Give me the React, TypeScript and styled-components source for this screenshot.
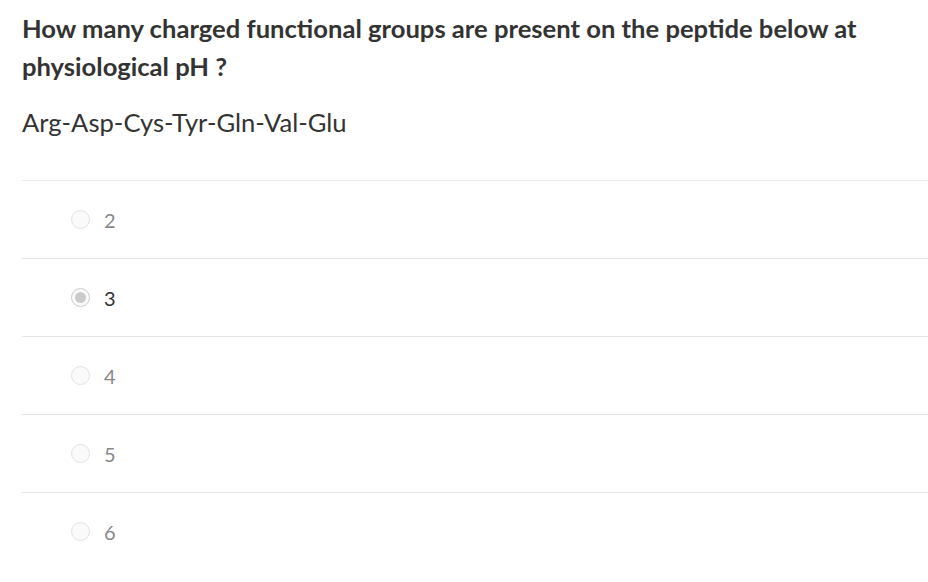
import React from "react";
import styled, { createGlobalStyle } from "styled-components";

const Global = createGlobalStyle`
  html, body { margin: 0; padding: 0; background: #fff; }
  body { font-family: Lato, "Open Sans", sans-serif; }
`;

const Page = styled.div`
  padding: 9px 0 0 22px;
  width: 906px;
`;

const Title = styled.h1`
  margin: 0;
  font-size: 25.6px;
  line-height: 38px;
  font-weight: 700;
  color: #333;
`;

const Peptide = styled.p`
  margin: 18px 0 0;
  font-size: 25.6px;
  line-height: 38px;
  color: #333;
`;

const Options = styled.div`
  margin-top: 39px;
  border-top: 1px solid #ececec;
`;

const Row = styled.label`
  display: flex;
  align-items: center;
  height: 77px;
  padding-left: 49px;
  gap: 14px;
  border-bottom: 1px solid #e4e4e4;
  &:last-child { border-bottom: none; }
`;

const Radio = styled.span<{ $on?: boolean }>`
  box-sizing: border-box;
  width: 19px;
  height: 19px;
  border-radius: 50%;
  border: 1px solid ${(p) => (p.$on ? "#cccccc" : "#e2e2e2")};
  background: #fafafa;
  display: flex;
  align-items: center;
  justify-content: center;
  &::after {
    content: "";
    width: 11px;
    height: 11px;
    border-radius: 50%;
    background: ${(p) => (p.$on ? "#cbcbcb" : "transparent")};
  }
`;

const Value = styled.span<{ $on?: boolean }>`
  font-size: 20px;
  color: ${(p) => (p.$on ? "#333" : "#888")};
`;

const opts = ["2", "3", "4", "5", "6"];

export default function App() {
  return (
    <>
      <Global />
      <Page>
        <Title>
          How many charged functional groups are present on the peptide below at physiological pH ?
        </Title>
        <Peptide>Arg-Asp-Cys-Tyr-Gln-Val-Glu</Peptide>
        <Options>
          {opts.map((o) => (
            <Row key={o}>
              <Radio $on={o === "3"} />
              <Value $on={o === "3"}>{o}</Value>
            </Row>
          ))}
        </Options>
      </Page>
    </>
  );
}
